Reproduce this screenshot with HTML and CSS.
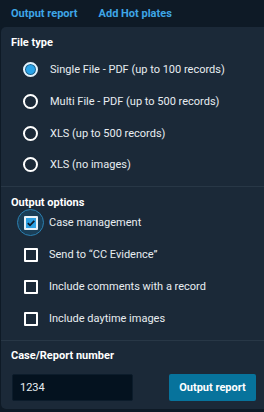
FILE: index.html
```html
<!DOCTYPE html>
<html>
<head>
<meta charset="utf-8">
<link rel="stylesheet" href="styles.css">
</head>
<body>
<div class="app">
  <div class="tabs">
    <span class="tab">Output report</span>
    <span class="tab">Add Hot plates</span>
  </div>
  <div class="panel">
    <section class="section s1">
      <h3 class="title">File type</h3>
      <div class="opts radios">
        <label class="opt"><span class="radio on"></span>Single File - PDF (up to 100 records)</label>
        <label class="opt"><span class="radio"></span>Multi File - PDF (up to 500 records)</label>
        <label class="opt"><span class="radio"></span>XLS (up to 500 records)</label>
        <label class="opt"><span class="radio"></span>XLS (no images)</label>
      </div>
    </section>
    <section class="section s2">
      <h3 class="title">Output options</h3>
      <div class="opts checks">
        <label class="opt"><span class="halo focus"><span class="check on"><svg viewBox="0 0 10 10" width="10" height="10"><path d="M1.8 5.2 L4 7.3 L8.3 2.8" fill="none" stroke="#0c1a28" stroke-width="1.8"/></svg></span></span>Case management</label>
        <label class="opt"><span class="halo"><span class="check"></span></span>Send to “CC Evidence”</label>
        <label class="opt"><span class="halo"><span class="check"></span></span>Include comments with a record</label>
        <label class="opt"><span class="halo"><span class="check"></span></span>Include daytime images</label>
      </div>
    </section>
    <section class="section s3">
      <h3 class="title">Case/Report number</h3>
      <div class="form">
        <div class="input">1234</div>
        <button class="btn">Output report</button>
      </div>
    </section>
  </div>
</div>
</body>
</html>
```

FILE: styles.css
```css
* { box-sizing: border-box; }
html, body { margin: 0; padding: 0; }
body {
  width: 264px;
  height: 412px;
  background: #0e1a26;
  font-family: Roboto, "Liberation Sans", sans-serif;
  font-size: 11px;
  color: #e6ebef;
  overflow: hidden;
}
.app { display: flex; flex-direction: column; height: 412px; }
.tabs {
  flex: none;
  height: 27px;
  display: flex;
  align-items: center;
  gap: 21px;
  padding: 0 0 0 11px;
}
.tab {
  color: #3ea6e6;
  font-weight: 700;
  font-size: 11px;
  line-height: 14px;
}
.panel {
  flex: none;
  height: 382px;
  margin-left: 1px;
  background: #1b2938;
  border-radius: 5px 0 0 5px;
  display: flex;
  flex-direction: column;
  overflow: hidden;
}
.section {
  border-bottom: 1px solid #283746;
  padding-left: 10px;
}
.s1 { padding-top: 9px; padding-bottom: 5px; }
.s2 { padding-top: 9px; padding-bottom: 5px; }
.s3 { padding-top: 8px; border-bottom: 0; }
.title {
  margin: 0;
  font-size: 11px;
  font-weight: 700;
  color: #ffffff;
  line-height: 14px;
}
.opts { display: flex; flex-direction: column; }
.radios { padding-top: 4px; }
.opt {
  display: flex;
  align-items: center;
  height: 31.7px;
  color: #e8edf1;
}
.radios .opt { padding-left: 12px; }
.radio {
  width: 15px;
  height: 15px;
  border: 2px solid #ffffff;
  border-radius: 50%;
  margin-right: 12px;
  flex: none;
}
.radio.on {
  border-color: #e4f2fb;
  background: #2aa3e8;
  box-shadow: inset 0 0 0 1px #1f5f88;
}
.checks { margin-top: -3px; }
.checks .opt { height: 32px; padding-left: 6px; }
.halo {
  width: 27px;
  height: 27px;
  border-radius: 50%;
  display: flex;
  align-items: center;
  justify-content: center;
  margin-right: 5px;
  flex: none;
}
.halo.focus {
  background: #1a3e57;
  border: 1px solid #2b7fb0;
}
.check {
  width: 14px;
  height: 14px;
  border: 2px solid #ffffff;
  border-radius: 1px;
  display: flex;
  align-items: center;
  justify-content: center;
}
.check.on {
  background: #2ca0e2;
  border-color: #e8f2f8;
}
.form {
  display: flex;
  justify-content: space-between;
  align-items: center;
  padding: 11px 8px 0 1px;
}
.input {
  width: 121px;
  height: 27px;
  background: #04121f;
  border: 1px solid #0c1c2b;
  border-radius: 2px;
  padding: 0 7px;
  line-height: 25px;
  font-size: 11px;
  color: #e8edf1;
}
.btn {
  width: 87px;
  height: 27px;
  background: #07739c;
  border: 0;
  border-radius: 2px;
  color: #ffffff;
  font-family: Roboto, "Liberation Sans", sans-serif;
  font-weight: 700;
  font-size: 11px;
  padding: 0;
}
```
